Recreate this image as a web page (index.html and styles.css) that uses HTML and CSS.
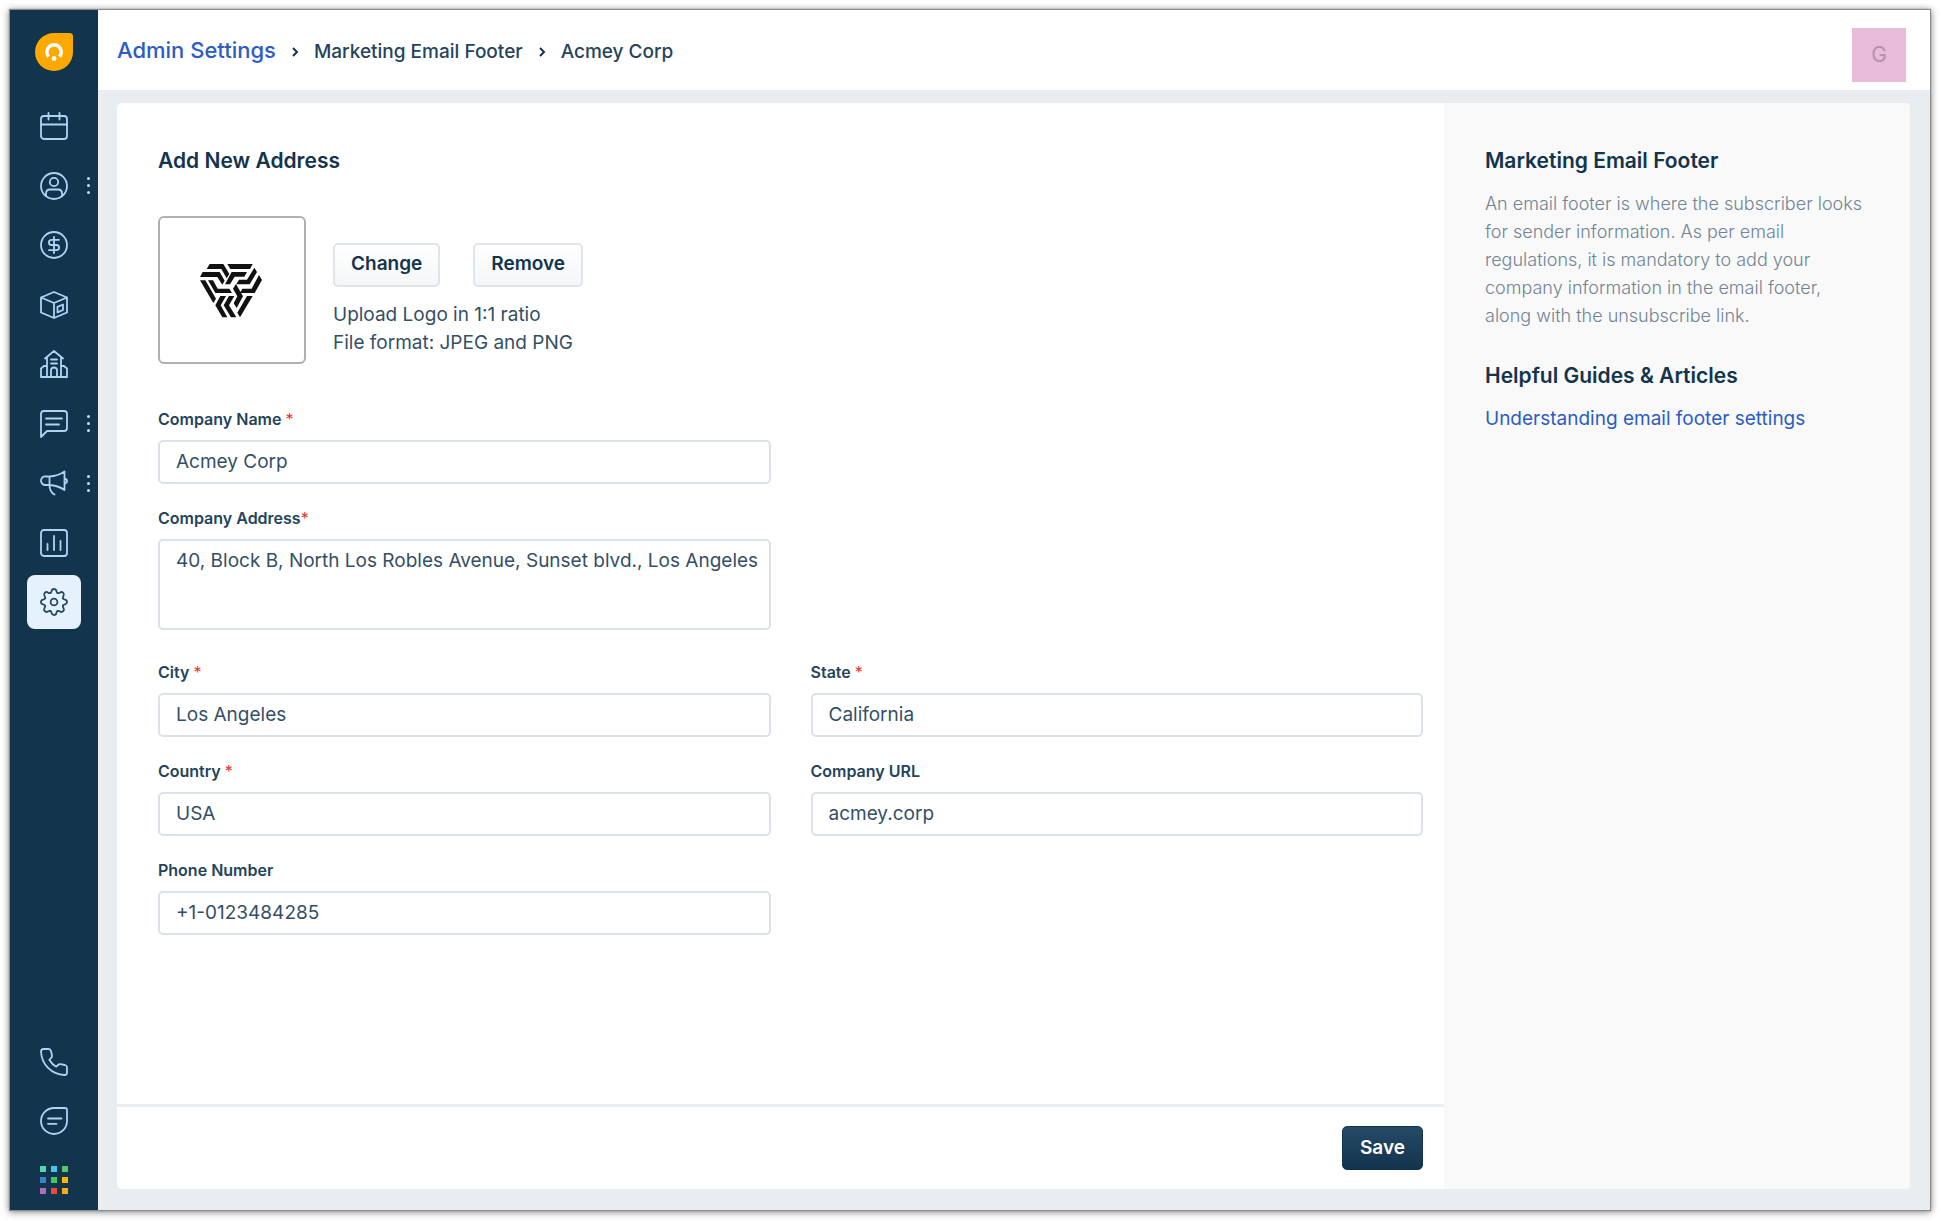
FILE: index.html
```html
<!DOCTYPE html>
<html lang="en">
<head>
<meta charset="utf-8">
<meta name="viewport" content="width=device-width, initial-scale=1">
<title>Marketing Email Footer</title>
<link rel="stylesheet" href="styles.css">
</head>
<body>
<div class="window">
  <nav class="sidebar" aria-label="Main">
    <a class="brand" href="#" aria-label="Home">
      <svg width="38" height="38" viewBox="0 0 38 38"><path d="M19 0H34.500Q38 0 38 3.500V19A19 19 0 1 1 19 0Z" fill="#ffa800"/><path d="M13.500 23.600A7.200 7.200 0 1 1 24.500 23.600" fill="none" stroke="#fff" stroke-width="3.600"/><circle cx="19" cy="25.500" r="2.400" fill="#fff"/></svg>
    </a>
    <ul class="menu menu-main">
      <li class="menu-row"><a class="tile" href="#" aria-label="Calendar"><svg class="icon" viewBox="0 0 28 28"><rect x="1" y="4" width="26" height="23" rx="3"/><path d="M1 12.500H27M8.500 1V7.500M19.500 1V7.500"/></svg></a></li>
      <li class="menu-row"><a class="tile" href="#" aria-label="Contacts"><svg class="icon" viewBox="0 0 28 28"><circle cx="14" cy="14" r="13"/><circle cx="14" cy="10" r="4.200"/><path d="M6 24V21.500Q6 17.500 10 17.500H18Q22 17.500 22 21.500V24"/></svg></a><button class="more" type="button" aria-label="More contacts"><i></i><i></i><i></i></button></li>
      <li class="menu-row"><a class="tile" href="#" aria-label="Deals"><svg class="icon" viewBox="0 0 28 28"><circle cx="14" cy="14" r="13"/><path d="M14 6V22M19 8.800H11.500A2.600 2.600 0 0 0 11.500 14H16.500A2.600 2.600 0 0 1 16.500 19.200H9"/></svg></a></li>
      <li class="menu-row"><a class="tile" href="#" aria-label="Products"><svg class="icon" viewBox="0 0 28 28"><path d="M14 1L27 6.500V21.500L14 27L1 21.500V6.500ZM1 6.500L14 12L27 6.500M14 12V27M17.500 15.800L23 13.500V19L17.500 21.300Z"/></svg></a></li>
      <li class="menu-row"><a class="tile" href="#" aria-label="Accounts"><svg class="icon" viewBox="0 0 28 28"><path d="M5 8.500L14 1L23 8.500M7 7.500V27M21 7.500V27M1 27H27M1 27V18.500L4 16H7M27 27V18.500L24 16H21M11 9.500H17M11 13.500H17M11 27V20.500A3 3 0 0 1 17 20.500V27"/></svg></a></li>
      <li class="menu-row"><a class="tile" href="#" aria-label="Conversations"><svg class="icon" viewBox="0 0 28 28"><path d="M1 27V4Q1 1 4 1H24Q27 1 27 4V18Q27 21 24 21H7ZM6 8.500H22M6 14.500H19"/></svg></a><button class="more" type="button" aria-label="More conversations"><i></i><i></i><i></i></button></li>
      <li class="menu-row"><a class="tile" href="#" aria-label="Campaigns"><svg class="icon" viewBox="0 0 28 28"><path d="M9.500 7.500H5.500A4 4 0 0 0 1 11.500A4.300 4.300 0 0 0 5.500 16H9.500ZM9.500 7.500Q18 7 24.500 2.500V21Q18 16.500 9.500 16M24.500 9.500Q27 10 27 12T24.500 14.500M9.500 16Q9.500 23 14.500 25.500"/></svg></a><button class="more" type="button" aria-label="More campaigns"><i></i><i></i><i></i></button></li>
      <li class="menu-row"><a class="tile" href="#" aria-label="Analytics"><svg class="icon" viewBox="0 0 28 28"><rect x="1" y="1" width="26" height="26" rx="3"/><path d="M7.500 15V21M14 7V21M20.500 12V21"/></svg></a></li>
      <li class="menu-row"><a class="tile tile-active" href="#" aria-label="Admin settings" aria-current="page"><svg class="icon" viewBox="-14 -14 28 28"><defs><path id="tooth" d="M-3.700 -8.900C-2.900 -9.200 -2.600 -10 -2.400 -11C-2 -12.800 -1.300 -13 0 -13S2 -12.800 2.400 -11C2.600 -10 2.900 -9.200 3.700 -8.900"/></defs><use href="#tooth"/><use href="#tooth" transform="rotate(45)"/><use href="#tooth" transform="rotate(90)"/><use href="#tooth" transform="rotate(135)"/><use href="#tooth" transform="rotate(180)"/><use href="#tooth" transform="rotate(225)"/><use href="#tooth" transform="rotate(270)"/><use href="#tooth" transform="rotate(315)"/><circle r="3.400"/></svg></a></li>
    </ul>
    <ul class="menu menu-tools">
      <li class="menu-row"><a class="tile" href="#" aria-label="Phone"><svg class="icon" viewBox="0 0 28 28"><path d="M3.500 1H8.500Q10.500 1 11 3L12 7.500Q12.200 9 11 10L9.300 11.800Q12 16.500 16.200 18.700L18 17Q19 16 20.500 16.200L25 17Q27 17.500 27 19.500V24.500Q27 27 24.500 27C11.500 26.500 1.500 16.500 1 3.500Q1 1 3.500 1Z"/></svg></a></li>
      <li class="menu-row"><a class="tile" href="#" aria-label="Chat"><svg class="icon" viewBox="0 0 28 28"><path d="M14 1H25Q27 1 27 3V14A13 13 0 1 1 14 1ZM8 11.500H21.500M8 16.800H16.500"/></svg></a></li>
      <li class="menu-row"><a class="tile" href="#" aria-label="Apps"><svg class="apps" viewBox="0 0 28 28"><path fill="#55d6ac" d="M0 0h6v6H0z"/><path fill="#42c9ea" d="M11 0h6v6h-6z"/><path fill="#58c474" d="M22 0h6v6h-6z"/><path fill="#3585cc" d="M0 11h6v6H0z"/><path fill="#42c766" d="M11 11h6v6h-6z"/><path fill="#ffb400" d="M22 11h6v6h-6z"/><path fill="#b06bbf" d="M0 22h6v6H0z"/><path fill="#ea4b35" d="M11 22h6v6h-6z"/><path fill="#f5ae0a" d="M22 22h6v6h-6z"/></svg></a></li>
    </ul>
  </nav>

  <div class="page">
    <header class="topbar">
      <nav class="crumbs" aria-label="Breadcrumb">
        <a class="crumb-root" href="#">Admin Settings</a>
        <svg class="chevron" viewBox="0 0 8 12"><path d="M2 2L6 6L2 10"/></svg>
        <span>Marketing Email Footer</span>
        <svg class="chevron" viewBox="0 0 8 12"><path d="M2 2L6 6L2 10"/></svg>
        <span>Acmey Corp</span>
      </nav>
      <button class="avatar" type="button" aria-label="Profile">G</button>
    </header>

    <div class="panel">
      <form class="editor">
        <div class="editor-body">
          <h1 class="heading">Add New Address</h1>
          <div class="logo-row">
            <div class="logo-box">
              <svg width="84" height="84" viewBox="0 8 252 252" fill="#111" role="img" aria-label="Company logo"><path d="M50 71L59 56H100L118 86L110 99L94 71ZM112 56H188L180 71H121ZM38 80H89L104 106L97 118L82 95H30ZM125 80H171L163 94H134L120 117H105ZM193 67L201 80L179 117H139L147 103H171ZM207 89L216 104L194 143H150L157 130H185ZM30 105H46L78 160L70 173ZM54 105H69L83 130H118L126 143H76ZM138 116L159 153L140 188L131 174L142 153L129 130ZM91 152H108L92 180L112 216H97L76 180ZM117 152H133L117 180L139 216H123L101 180ZM171 152H188L150 216L142 202Z"/></svg>
            </div>
            <div class="logo-side">
              <div class="logo-actions">
                <button class="btn" type="button">Change</button>
                <button class="btn" type="button">Remove</button>
              </div>
              <p class="hint">Upload Logo in 1:1 ratio<br>File format: JPEG and PNG</p>
            </div>
          </div>
          <div class="fields">
            <div class="field field-left"><label for="name">Company Name <span class="req">*</span></label><input id="name" type="text" value="Acmey Corp"></div>
            <div class="field field-left field-tall"><label for="address">Company Address<span class="req">*</span></label><textarea id="address">40, Block B, North Los Robles Avenue, Sunset blvd., Los Angeles</textarea></div>
            <div class="field field-left"><label for="city">City <span class="req">*</span></label><input id="city" type="text" value="Los Angeles"></div>
            <div class="field"><label for="state">State <span class="req">*</span></label><input id="state" type="text" value="California"></div>
            <div class="field"><label for="country">Country <span class="req">*</span></label><input id="country" type="text" value="USA"></div>
            <div class="field"><label for="url">Company URL</label><input id="url" type="text" value="acmey.corp"></div>
            <div class="field"><label for="phone">Phone Number</label><input id="phone" type="tel" value="+1-0123484285"></div>
          </div>
        </div>
        <div class="editor-foot"><button class="btn btn-primary" type="submit">Save</button></div>
      </form>
      <aside class="help">
        <h2 class="heading">Marketing Email Footer</h2>
        <p class="help-text">An email footer is where the subscriber looks for sender information. As per email regulations, it is mandatory to add your company information in the email footer, along with the unsubscribe link.</p>
        <h2 class="heading">Helpful Guides &amp; Articles</h2>
        <a class="help-link" href="#">Understanding email footer settings</a>
      </aside>
    </div>
  </div>
</div>
</body>
</html>
```
FILE: styles.css
```css
* { box-sizing: border-box; }

body {
  margin: 0;
  padding: 10px 11px 11px 10px;
  min-height: 100vh;
  display: flex;
  background: #fff;
  color: #12344d;
  font: 400 19px/28px Inter, "Liberation Sans", sans-serif;
}

h1, h2, p, ul { margin: 0; padding: 0; }
button, input, textarea { font: inherit; color: inherit; }
a { text-decoration: none; }

.window {
  flex: 1;
  display: flex;
  background: #e9edf0;
  box-shadow: 0 0 1px 1px #8c8c8c, 0 1px 7px 1px rgba(0, 0, 0, 0.5);
}

/* Sidebar */
.sidebar {
  flex: none;
  width: 88px;
  display: flex;
  flex-direction: column;
  align-items: center;
  padding: 23px 0 3px;
  background: #12344d;
}
.brand { display: flex; margin-bottom: 28px; }
.menu { list-style: none; display: flex; flex-direction: column; gap: 5px; }
.menu-main { min-height: 530px; gap: 0; justify-content: space-between; }
.menu-tools { margin-top: auto; }
.menu-row { display: grid; grid-template-columns: 54px 17px; margin-left: 17px; }
.tile {
  width: 54px;
  height: 54px;
  display: flex;
  align-items: center;
  justify-content: center;
  border-radius: 8px;
  color: #b0d3f5;
}
.tile-active { background: #e5f2fd; color: #264966; }
.icon {
  width: 28px;
  height: 28px;
  fill: none;
  stroke: currentColor;
  stroke-width: 1.8;
  stroke-linecap: round;
  stroke-linejoin: round;
}
.apps { width: 28px; height: 28px; }
.more {
  display: flex;
  flex-direction: column;
  align-items: center;
  justify-content: center;
  gap: 4px;
  padding: 0 2px 0 0;
  border: 0;
  background: none;
}
.more i { width: 3px; height: 3px; border-radius: 50%; background: #c9dcec; }

/* Top bar */
.page { flex: 1; min-width: 0; display: flex; flex-direction: column; }
.topbar {
  display: flex;
  justify-content: space-between;
  align-items: flex-start;
  height: 80px;
  padding: 18px 24px 0 19px;
  background: #fff;
}
.crumbs { display: flex; align-items: baseline; padding-top: 8px; font-weight: 500; color: #24445b; }
.crumb-root { color: #2c5cc5; font-size: 22px; }
.chevron {
  width: 8px;
  height: 12px;
  margin: 0 15px;
  fill: none;
  stroke: #12344d;
  stroke-width: 2;
}
.avatar {
  width: 54px;
  height: 54px;
  padding: 0;
  border: 0;
  background: #e9bbdb;
  color: #b38fab;
  font-size: 21px;
}

/* Content panel */
.panel {
  flex: 1;
  display: flex;
  margin: 13px 20px 21px 19px;
  border-radius: 5px;
  overflow: hidden;
  background: #fff;
}
.editor { flex: 1; min-width: 0; display: flex; flex-direction: column; }
.editor-body { flex: 1; padding: 44px 21px 40px 41px; }
.heading { font-size: 21px; line-height: 28px; font-weight: 600; }

.logo-row { display: flex; gap: 27px; margin: 41px 0 45px; }
.logo-box {
  flex: none;
  width: 148px;
  height: 148px;
  display: flex;
  align-items: center;
  justify-content: center;
  border: 2px solid #b0b0b0;
  border-radius: 6px;
}
.logo-side { padding-top: 27px; }
.logo-actions { display: flex; gap: 33px; margin-bottom: 14px; }
.btn {
  height: 44px;
  padding: 0 16px 2px;
  border: 2px solid #dfe5eb;
  border-radius: 5px;
  background: linear-gradient(#fff, #f4f6f8);
  font-weight: 600;
}
.hint { color: #344f65; }

.fields {
  display: grid;
  grid-template-columns: 1fr 1fr;
  column-gap: 40px;
  row-gap: 24px;
}
.field { display: flex; flex-direction: column; gap: 11px; }
.field-left { grid-column: 1; }
.field-tall { margin-bottom: 8px; }
.field label { font-size: 16px; line-height: 20px; font-weight: 600; color: #24445b; }
.req { color: #e43538; font-weight: 400; }
.field input,
.field textarea {
  width: 100%;
  height: 44px;
  padding: 0 8px 2px 16px;
  border: 2px solid #dae1e8;
  border-radius: 5px;
  background: #fff;
  color: #344f65;
}
.field textarea { display: block; height: 91px; padding: 6px 8px 6px 16px; resize: none; overflow: hidden; }

.editor-foot {
  display: flex;
  justify-content: flex-end;
  padding: 19px 21px 19px;
  border-top: 3px solid #e9eef2;
}
.btn-primary {
  border: 1px solid #12344d;
  padding: 0 17px;
  background: linear-gradient(#264966, #12344d);
  color: #fff;
}

/* Help column */
.help { flex: none; width: 466px; padding: 44px 40px 40px 41px; background: #f9f9f9; }
.help-text { margin: 15px 0 32px; font-size: 18px; font-weight: 300; color: #6f8495; }
.help-link { display: block; margin-top: 15px; color: #2c5cc5; }
```
